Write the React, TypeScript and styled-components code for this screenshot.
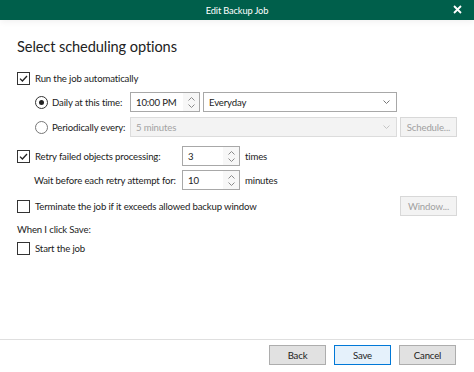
import styled, { createGlobalStyle } from "styled-components";

const GlobalStyle = createGlobalStyle`
  html, body, #root {
    margin: 0;
    padding: 0;
    height: 100%;
  }
  body {
    background: #ffffff;
    font-family: Lato, "Noto Sans", sans-serif;
    font-size: 9.6px;
    letter-spacing: -0.15px;
    color: #1b1b1b;
  }
`

const Dialog = styled.div`
  display: flex;
  flex-direction: column;
  height: 100%;
`

const TitleBar = styled.div`
  position: relative;
  height: 20px;
  background: #005f4b;
  color: #ffffff;
  display: flex;
  align-items: center;
  justify-content: center;
  font-size: 9.3px;
  box-shadow: 0 2px 6px rgba(0, 0, 0, 0.06);
`

const CloseButton = styled.div`
  position: absolute;
  right: 11px;
  top: 4px;
  width: 11px;
  height: 11px;
  display: flex;
  align-items: center;
  justify-content: center;
`

const Content = styled.div`
  flex: 1;
  display: flex;
  flex-direction: column;
  padding: 0 17px;
`

const Heading = styled.div`
  margin-top: 16px;
  height: 20px;
  display: flex;
  align-items: center;
  font-size: 14.6px;
  letter-spacing: -0.1px;
  color: #222;
`

const Row = styled.div<{ $top: number; $indent?: number; $height?: number }>`
  display: flex;
  align-items: center;
  height: ${(p) => p.$height ?? 20}px;
  margin-top: ${(p) => p.$top}px;
  padding-left: ${(p) => p.$indent ?? 0}px;
`

const Label = styled.div<{ $width?: number }>`
  display: flex;
  align-items: center;
  gap: 5px;
  width: ${(p) => (p.$width ? `${p.$width}px` : "auto")};
  flex-shrink: 0;
  white-space: nowrap;
`

const Box = styled.div`
  width: 11px;
  height: 11px;
  border: 1px solid #333;
  background: #fff;
  display: flex;
  align-items: center;
  justify-content: center;
  flex-shrink: 0;
`

const Radio = styled.div<{ $on?: boolean }>`
  width: 11px;
  height: 11px;
  border-radius: 50%;
  border: 1px solid ${(p) => (p.$on ? "#333" : "#777")};
  background: #fff;
  display: flex;
  align-items: center;
  justify-content: center;
  flex-shrink: 0;
  margin-right: -1px;
  &::after {
    content: "";
    display: ${(p) => (p.$on ? "block" : "none")};
    width: 5px;
    height: 5px;
    border-radius: 50%;
    background: #222;
  }
`

const Field = styled.div<{ $width: number; $disabled?: boolean }>`
  width: ${(p) => p.$width}px;
  height: 20px;
  box-sizing: border-box;
  border: 1px solid ${(p) => (p.$disabled ? "#dcdcdc" : "#a8a8a8")};
  background: ${(p) => (p.$disabled ? "#f3f3f3" : "#fff")};
  color: ${(p) => (p.$disabled ? "#a2a2a2" : "#1b1b1b")};
  display: flex;
  align-items: center;
  padding-left: 5px;
  flex-shrink: 0;
`

const FieldText = styled.span`
  flex: 1;
  white-space: nowrap;
`

const Spinner = styled.div`
  width: 16px;
  height: 100%;
  display: flex;
  flex-direction: column;
  align-items: center;
  justify-content: center;
  gap: 3px;
  background: #f7f7f7;
`

const DropArrow = styled.div`
  width: 20px;
  display: flex;
  align-items: center;
  justify-content: center;
`

const Suffix = styled.span`
  margin-left: 5px;
`

const Button = styled.div<{ $disabled?: boolean; $primary?: boolean }>`
  width: 57px;
  height: 20px;
  box-sizing: border-box;
  border: 1px solid ${(p) => (p.$primary ? "#0078d7" : p.$disabled ? "#d8d8d8" : "#adadad")};
  background: ${(p) => (p.$disabled ? "#f3f3f3" : p.$primary ? "#e5f1fb" : "#e1e1e1")};
  color: ${(p) => (p.$disabled ? "#a0a0a0" : "#1b1b1b")};
  display: flex;
  align-items: center;
  justify-content: center;
  flex-shrink: 0;
`

const Spacer = styled.div`
  flex: 1;
`

const Footer = styled.div`
  border-top: 1px solid #dfdfdf;
  height: 30px;
  display: flex;
  align-items: center;
  justify-content: flex-end;
  gap: 8px;
  padding: 0 18px 1px 0;
  margin-bottom: 1px;
`

const Check = () => (
  <svg width="9" height="9" viewBox="0 0 9 9">
    <path d="M1 4.6 L3.4 7 L8 2" fill="none" stroke="#222" strokeWidth="1.3" />
  </svg>
)

const Chevron = ({ up, color = "#8a8a8a" }: { up?: boolean; color?: string }) => (
  <svg width="7" height="4" viewBox="0 0 7 4">
    <path d={up ? "M0.5 3.5 L3.5 0.5 L6.5 3.5" : "M0.5 0.5 L3.5 3.5 L6.5 0.5"} fill="none" stroke={color} strokeWidth="1" />
  </svg>
)

const SpinField = ({ value, width }: { value: string; width: number }) => (
  <Field $width={width}>
    <FieldText>{value}</FieldText>
    <Spinner>
      <Chevron up />
      <Chevron />
    </Spinner>
  </Field>
)

export default function App() {
  return (
    <Dialog>
      <GlobalStyle />
      <TitleBar>
        Edit Backup Job
        <CloseButton>
          <svg width="9" height="9" viewBox="0 0 9 9">
            <path d="M1 1 L8 8 M8 1 L1 8" stroke="#fff" strokeWidth="1.8" />
          </svg>
        </CloseButton>
      </TitleBar>
      <Content>
        <Heading>Select scheduling options</Heading>

        <Row $top={12}>
          <Label>
            <Box><Check /></Box>
            Run the job automatically
          </Label>
        </Row>

        <Row $top={4} $indent={18}>
          <Label $width={95}>
            <Radio $on />
            Daily at this time:
          </Label>
          <SpinField value="10:00 PM" width={70} />
          <Field $width={194} style={{ marginLeft: 3 }}>
            <FieldText>Everyday</FieldText>
            <DropArrow><Chevron color="#777" /></DropArrow>
          </Field>
        </Row>

        <Row $top={5} $indent={18}>
          <Label $width={95}>
            <Radio />
            Periodically every:
          </Label>
          <Field $width={267} $disabled>
            <FieldText>5 minutes</FieldText>
            <DropArrow><Chevron color="#c4c4c4" /></DropArrow>
          </Field>
          <Spacer />
          <Button $disabled>Schedule...</Button>
        </Row>

        <Row $top={9}>
          <Label $width={165}>
            <Box><Check /></Box>
            Retry failed objects processing:
          </Label>
          <SpinField value="3" width={58} />
          <Suffix>times</Suffix>
        </Row>

        <Row $top={4} $indent={17}>
          <Label $width={148}>Wait before each retry attempt for:</Label>
          <SpinField value="10" width={58} />
          <Suffix>minutes</Suffix>
        </Row>

        <Row $top={6}>
          <Label>
            <Box />
            Terminate the job if it exceeds allowed backup window
          </Label>
          <Spacer />
          <Button $disabled>Window...</Button>
        </Row>

        <Row $top={4} $height={18}>
          <Label>When I click Save:</Label>
        </Row>

        <Row $top={0}>
          <Label>
            <Box />
            Start the job
          </Label>
        </Row>
      </Content>
      <Footer>
        <Button>Back</Button>
        <Button $primary>Save</Button>
        <Button>Cancel</Button>
      </Footer>
    </Dialog>
  )
}
